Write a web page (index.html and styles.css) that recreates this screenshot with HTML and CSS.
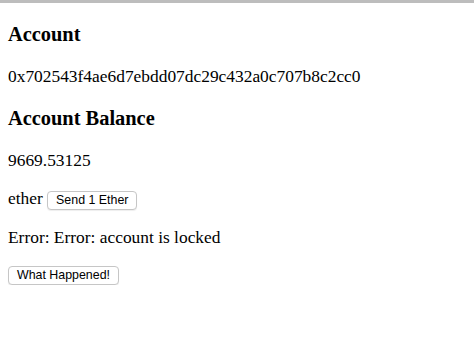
FILE: index.html
```html
<!DOCTYPE html>
<html>
<head>
<meta charset="utf-8">
<link rel="stylesheet" href="styles.css">
</head>
<body>
<div class="app">
  <h3 class="title">Account</h3>
  <p class="line wide">0x702543f4ae6d7ebdd07dc29c432a0c707b8c2cc0</p>
  <h3 class="title">Account Balance</h3>
  <p class="line tight">9669.53125</p>
  <p class="line send">ether <button class="btn">Send 1 Ether</button></p>
  <p class="line">Error: Error: account is locked</p>
  <button class="btn">What Happened!</button>
</div>
</body>
</html>
```

FILE: styles.css
```css
html {
  border-top: 3px solid #bdbdbd;
  background: #fff;
}
body {
  margin: 0;
  font-family: "Liberation Serif", "Times New Roman", serif;
  color: #000;
}
.app {
  display: flex;
  flex-direction: column;
  align-items: flex-start;
  padding: 19.4px 8px 0;
}
.title {
  font-size: 20.4px;
  line-height: 24px;
  font-weight: bold;
  margin: 0 0 19.6px;
}
.line {
  font-size: 17.4px;
  line-height: 20px;
  margin: 0 0 18.8px;
}
.line.wide {
  margin-bottom: 20.3px;
}
.line.tight {
  margin-bottom: 18px;
}
.line.send {
  margin-bottom: 17.4px;
}
.btn {
  font-family: "Liberation Sans", Arial, sans-serif;
  font-size: 12.4px;
  line-height: normal;
  color: #000;
  background: #fff;
  border: 1px solid #c6c6c6;
  border-radius: 4px;
  padding: 1px 8px 2px;
  margin: 0;
  box-shadow: 0 1px 1px rgba(0, 0, 0, 0.07);
}
```
